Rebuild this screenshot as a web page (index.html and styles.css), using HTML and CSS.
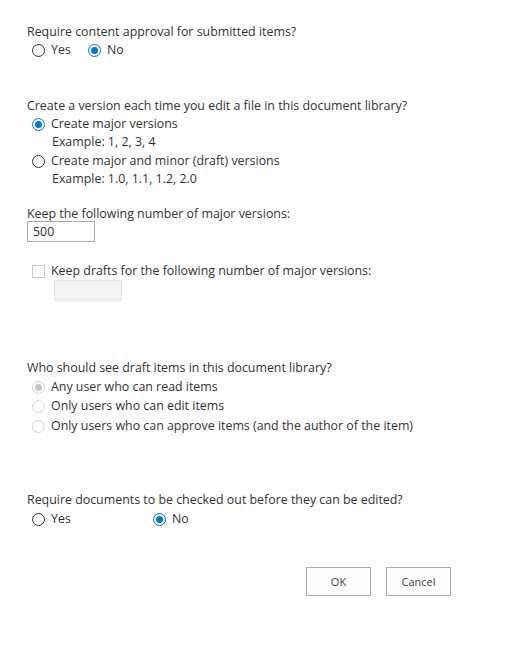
FILE: index.html
```html
<!DOCTYPE html>
<html>
<head>
<meta charset="utf-8">
<link rel="stylesheet" href="styles.css">
</head>
<body>
<div class="page">
  <section class="q q1">
    <div class="label">Require content approval for submitted items?</div>
    <div class="row inline">
      <label class="opt w-yes"><input type="radio" name="a"><span>Yes</span></label>
      <label class="opt"><input type="radio" name="a" checked><span>No</span></label>
    </div>
  </section>

  <section class="q q2">
    <div class="label">Create a version each time you edit a file in this document library?</div>
    <label class="opt"><input type="radio" name="v" checked><span>Create major versions</span></label>
    <div class="example">Example: 1, 2, 3, 4</div>
    <label class="opt opt2"><input type="radio" name="v"><span>Create major and minor (draft) versions</span></label>
    <div class="example">Example: 1.0, 1.1, 1.2, 2.0</div>
  </section>

  <section class="q q3">
    <div class="label short">Keep the following number of major versions:</div>
    <div class="textbox">500</div>
    <label class="opt check"><input type="checkbox" disabled><span>Keep drafts for the following number of major versions:</span></label>
    <div class="textbox disabled"></div>
  </section>

  <section class="q q4">
    <div class="label">Who should see draft items in this document library?</div>
    <label class="opt dis"><input type="radio" name="d" checked disabled><span>Any user who can read items</span></label>
    <label class="opt dis"><input type="radio" name="d" disabled><span>Only users who can edit items</span></label>
    <label class="opt dis o3"><input type="radio" name="d" disabled><span>Only users who can approve items (and the author of the item)</span></label>
  </section>

  <section class="q q5">
    <div class="label">Require documents to be checked out before they can be edited?</div>
    <div class="row inline">
      <label class="opt w-yes2"><input type="radio" name="c"><span>Yes</span></label>
      <label class="opt"><input type="radio" name="c" checked><span>No</span></label>
    </div>
  </section>

  <div class="buttons">
    <button class="btn">OK</button>
    <button class="btn">Cancel</button>
  </div>
</div>
</body>
</html>
```

FILE: styles.css
```css
html, body {
  margin: 0;
  padding: 0;
  background: #ffffff;
}
body {
  font-family: "Open Sans", "Noto Sans", sans-serif;
  font-size: 12.4px;
  color: #333333;
  width: 521px;
  height: 647px;
  overflow: hidden;
}
.page {
  padding: 23px 0 0 27px;
}
.label {
  line-height: 18px;
  height: 18px;
  white-space: nowrap;
}
.opt {
  display: flex;
  align-items: center;
  height: 18px;
  line-height: 18px;
  white-space: nowrap;
}
.inline {
  display: flex;
}
.opt input {
  -webkit-appearance: none;
  appearance: none;
  margin: 0 6px 0 5px;
  width: 13px;
  height: 13px;
  border: 1px solid #333333;
  border-radius: 50%;
  box-sizing: border-box;
  background: #fff;
  position: relative;
  flex: none;
}
.opt input:checked {
  border-color: #0078d4;
}
.opt input:checked::after {
  content: "";
  position: absolute;
  left: 2px;
  top: 2px;
  width: 7px;
  height: 7px;
  border-radius: 50%;
  background: #0078d4;
}
.opt.dis input {
  border-color: #d2d2d2;
}
.opt.dis input:checked::after {
  background: #c8c8c8;
}
.w-yes { width: 56px; }
.w-yes2 { width: 121px; }

.q2 { margin-top: 38px; }
.opt2 { margin-top: 1px; }
.example {
  padding-left: 25px;
  line-height: 18px;
  height: 18px;
}

.q3 { margin-top: 17px; }
.label.short { height: 16px; }
.textbox {
  width: 68px;
  height: 21px;
  box-sizing: border-box;
  border: 1px solid #ababab;
  padding: 0 0 0 5px;
  line-height: 19px;
  background: #fff;
}
.check { margin-top: 20px; }
.check input {
  border-radius: 0;
  border-color: #c8c8c8;
}
.textbox.disabled {
  margin-top: 0;
  margin-left: 27px;
  background: #f4f4f4;
  border-color: #e6e6e6;
}

.q4 { margin-top: 58px; }
.q4 .opt { margin-top: 1px; }
.q4 .o3 { margin-top: 2px; }

.q5 { margin-top: 56px; }
.q5 .row { margin-top: 1px; }

.buttons {
  display: flex;
  gap: 15px;
  margin-top: 39px;
  margin-left: 279px;
}
.btn {
  width: 65px;
  height: 29px;
  box-sizing: border-box;
  border: 1px solid #ababab;
  background: #fdfdfd;
  font-family: "Open Sans", "Noto Sans", sans-serif;
  font-size: 11px;
  color: #444444;
  padding: 0;
}
```
